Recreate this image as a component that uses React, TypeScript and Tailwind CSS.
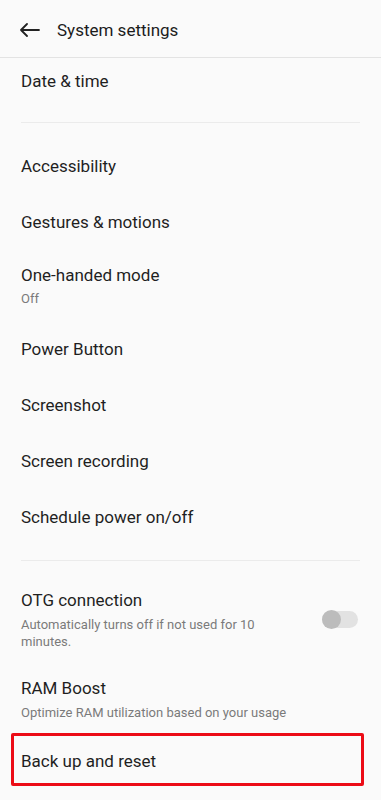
import React from 'react';

// Android-style "System settings" list, single column, 381px wide.

const font = { fontFamily: 'Roboto, "Liberation Sans", sans-serif' };

function Row({ title }: { title: string }) {
  return (
    <div className="flex h-[56px] items-center px-[21px]">
      <span className="text-[17px] leading-6 text-[#1f1f1f]">{title}</span>
    </div>
  );
}

export default function App() {
  return (
    <div className="min-h-[800px] w-[381px] bg-[#fafafa] overflow-hidden" style={font}>
      {/* Barre de titre */}
      <div className="flex h-[58px] items-center border-b border-[#e3e3e3] pt-[3px]">
        <svg className="ml-[19px]" width="21" height="14" viewBox="0 0 21 14" fill="none">
          <path d="M20 7H2M8 1L2 7l6 6" stroke="#222" strokeWidth="1.8" strokeLinecap="round" strokeLinejoin="round" />
        </svg>
        <span className="ml-[17px] text-[17px] leading-6 text-[#1c1c1c]">System settings</span>
      </div>

      <div className="flex h-[46px] items-center px-[21px]">
        <span className="text-[17px] leading-6 text-[#1f1f1f]">Date &amp; time</span>
      </div>

      <div className="mx-[21px] mt-[18px] border-t border-[#ebebeb]" />

      <div className="pt-[15px]">
        <Row title="Accessibility" />
        <Row title="Gestures & motions" />
        <div className="flex h-[71px] flex-col px-[21px] pt-[13px]">
          <span className="text-[17px] leading-6 text-[#1f1f1f]">One-handed mode</span>
          <span className="mt-[3px] text-[13px] leading-[17px] text-[#7a7a7a]">Off</span>
        </div>
        <Row title="Power Button" />
        <Row title="Screenshot" />
        <Row title="Screen recording" />
        <Row title="Schedule power on/off" />
      </div>

      <div className="mx-[21px] mt-[15px] border-t border-[#ebebeb]" />

      <div className="flex items-center pl-[21px] pr-[23px] pt-[27px]">
        <div className="flex w-[285px] flex-col">
          <span className="text-[17px] leading-6 text-[#1f1f1f]">OTG connection</span>
          <span className="mt-1 text-[13px] leading-[17px] text-[#7a7a7a]">
            Automatically turns off if not used for 10 minutes.
          </span>
        </div>
        <div className="ml-auto relative h-[17px] w-[36px] rounded-full bg-[#e2e2e2]">
          <div className="absolute left-0 top-[-1px] h-[19px] w-[19px] rounded-full bg-[#bcbcbc]" />
        </div>
      </div>

      <div className="flex flex-col px-[21px] pt-[26px]">
        <span className="text-[17px] leading-6 text-[#1f1f1f]">RAM Boost</span>
        <span className="mt-1 text-[13px] leading-[17px] text-[#7a7a7a]">
          Optimize RAM utilization based on your usage
        </span>
      </div>

      {/* Encadré rouge */}
      <div className="ml-[11px] mt-[12px] flex h-[53px] w-[353px] items-center rounded-[2px] border-[3px] border-[#ec0c16] pl-[7px] pt-[2px]">
        <span className="text-[17px] leading-6 text-[#1f1f1f]">Back up and reset</span>
      </div>
    </div>
  );
}
